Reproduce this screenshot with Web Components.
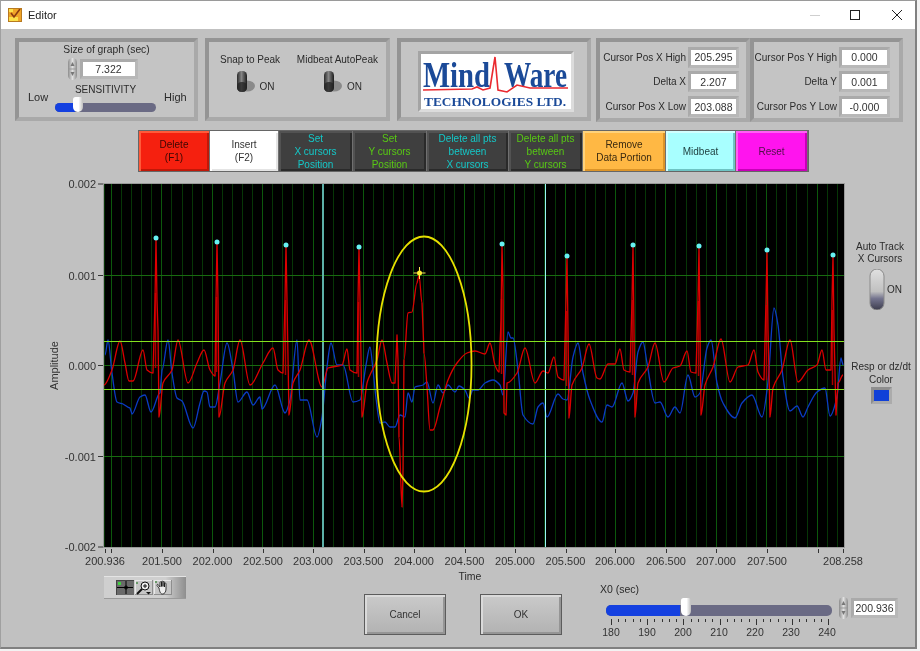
<!DOCTYPE html>
<html>
<head>
<meta charset="utf-8">
<title>Editor</title>
<style>
  html, body { margin: 0; height: 100%; background: #f2f2f2; overflow: hidden; }
  body { font: 10px "Liberation Sans", Arial, sans-serif; color: #2b2b2b; }
</style>
</head>
<body>
<editor-window>
  <top-bar></top-bar>
  <button-bar></button-bar>
  <graph-row></graph-row>
  <bottom-row></bottom-row>
</editor-window>

<script>
class editorWindow extends HTMLElement {
    constructor() {
        super();
        this.attachShadow({ mode: "open" });
    }
    connectedCallback() {
        this.shadowRoot.innerHTML = `
        <style>
            :host {
                display: block;
                width: 917px;
                height: 649px;
                box-sizing: border-box;
                border-top: 1px solid #9a9a9a;
                border-left: 1px solid #a0a0a0;
                border-right: 2px solid #808080;
                border-bottom: 2px solid #808080;
                background: #c1c1c1;
                filter: blur(.3px);
            }
            .title {
                display: flex;
                align-items: center;
                height: 28px;
                background: #fff;
                padding-left: 7px;
                font-size: 11px;
                color: #222;
            }
            .title svg.app { margin-right: 6px; }
            .title span { flex: 1; }
            .controls { display: flex; align-items: center; padding-right: 13px; }
            .controls svg { display: block; }
            .controls svg + svg { margin-left: 30px; }
        </style>
        <div class="title">
            <svg class="app" width="14" height="14" viewBox="0 0 14 14">
                <rect width="14" height="14" fill="#f0a428"/>
                <rect x="1" y="9" width="9" height="4" fill="#fbe04a"/>
                <rect x="1" y="1" width="4" height="3" fill="#fbe04a"/>
                <path d="M3 5l3 4 6-8" fill="none" stroke="#8a3a10" stroke-width="1.600"/>
                <rect x=".5" y=".5" width="13" height="13" fill="none" stroke="#b87a20"/>
            </svg>
            <span>Editor</span>
            <div class="controls">
                <svg width="10" height="10" viewBox="0 0 10 10"><path d="M0 5.500H10" stroke="#cfcfcf"/></svg>
                <svg width="10" height="10" viewBox="0 0 10 10"><rect x=".5" y=".5" width="9" height="9" fill="none" stroke="#222"/></svg>
                <svg style="margin-left:32px" width="10" height="10" viewBox="0 0 10 10"><path d="M0 0L10 10M10 0L0 10" stroke="#222"/></svg>
            </div>
        </div>
        <slot></slot>
        `;
    }
}

class lvPanel extends HTMLElement {
    constructor() {
        super();
        this.attachShadow({ mode: "open" });
    }
    connectedCallback() {
        this.shadowRoot.innerHTML = `
        <style>
            :host {
                display: block;
                box-sizing: border-box;
                height: 83px;
                border: 4px solid;
                border-color: #949494 #a9a9a9 #a9a9a9 #949494;
                background: #c4c4c4;
            }
        </style>
        <slot></slot>
        `;
    }
}

class lvNumeric extends HTMLElement {
    constructor() {
        super();
        this.attachShadow({ mode: "open" });
    }
    connectedCallback() {
        const spin = this.hasAttribute("spin") ? `
            <svg class="spin" width="11" height="22" viewBox="0 0 11 22">
                <defs><linearGradient id="s" x1="0" x2="1" y1="0" y2="0">
                    <stop offset="0" stop-color="#8c8c8c"/><stop offset=".5" stop-color="#e0e0e0"/><stop offset="1" stop-color="#8c8c8c"/>
                </linearGradient></defs>
                <rect x="1" y="0" width="9" height="22" rx="4.500" fill="url(#s)"/>
                <path d="M5.500 4L3.500 8H7.500Z M5.500 18L3.500 14H7.500Z" fill="#777"/>
                <path d="M2 11H9" stroke="#999"/>
            </svg>` : "";
        this.shadowRoot.innerHTML = `
        <style>
            :host { display: inline-flex; align-items: center; }
            .spin { margin-right: 2px; }
            .box {
                box-sizing: border-box;
                width: var(--w, 51px);
                height: var(--h, 21px);
                border: 3px solid;
                border-color: #aaaaaa #b8b8b8 #b8b8b8 #aaaaaa;
                background: #fff;
                display: flex;
                align-items: center;
                justify-content: center;
                font-size: 10.500px;
                color: #333;
            }
        </style>
        ${spin}
        <div class="box">${this.getAttribute("value")}</div>
        `;
    }
}

class lvToggle extends HTMLElement {
    constructor() {
        super();
        this.attachShadow({ mode: "open" });
    }
    connectedCallback() {
        this.shadowRoot.innerHTML = `
        <style>
            :host {
                display: flex;
                flex-direction: column;
                align-items: center;
                font-size: 10px;
            }
            .row { display: flex; align-items: flex-end; margin-top: 5px; margin-left: 10px; }
            .on { margin-left: 5px; margin-bottom: 1px; }
        </style>
        <div>${this.getAttribute("label")}</div>
        <div class="row">
            <svg width="19" height="23" viewBox="0 0 19 23">
                <defs><linearGradient id="k" x1="0" x2="1" y1="0" y2="0">
                    <stop offset="0" stop-color="#2a2a2a"/><stop offset=".45" stop-color="#858585"/><stop offset="1" stop-color="#1c1c1c"/>
                </linearGradient></defs>
                <ellipse cx="11" cy="16" rx="8" ry="5.500" fill="#8a8a8a"/>
                <rect x="1" y="1" width="10" height="21" rx="4.500" fill="url(#k)"/>
                <rect x="1" y="12" width="10" height="10" rx="4.500" fill="#222" opacity=".75"/>
            </svg>
            <span class="on">ON</span>
        </div>
        `;
    }
}

class lvSlider extends HTMLElement {
    constructor() {
        super();
        this.attachShadow({ mode: "open" });
    }
    connectedCallback() {
        this.shadowRoot.innerHTML = `
        <style>
            :host {
                display: block;
                position: relative;
                height: var(--track, 9px);
                border-radius: 5px;
                background: #6a6a84;
            }
            .fill {
                height: 100%;
                width: ${this.getAttribute("fill")}px;
                border-radius: 5px 0 0 5px;
                background: #1440e0;
            }
            .thumb {
                position: absolute;
                left: ${this.getAttribute("thumb")}px;
                bottom: 0;
                width: 10px;
                height: var(--thumb, 15px);
                border-radius: 3px 3px 6px 6px;
                background: linear-gradient(90deg, #fff 55%, #bdbdbd);
            }
        </style>
        <div class="fill"></div>
        <div class="thumb"></div>
        `;
    }
}

class mindwareLogo extends HTMLElement {
    constructor() {
        super();
        this.attachShadow({ mode: "open" });
    }
    connectedCallback() {
        this.shadowRoot.innerHTML = `
        <style>
            :host {
                display: block;
                box-sizing: border-box;
                width: 156px;
                height: 61px;
                border: 3px solid;
                border-color: #a4a4a4 #dcdcdc #dcdcdc #a4a4a4;
            }
            svg { display: block; background: #fff; }
            text { font-family: "Liberation Serif", "Times New Roman", serif; font-weight: bold; fill: #1b4a98; }
        </style>
        <svg width="150" height="55" viewBox="0 0 150 55">
            <text transform="translate(2 33) scale(1 1.250)" font-size="28" textLength="67" lengthAdjust="spacingAndGlyphs">Mind</text>
            <text transform="translate(83 33) scale(1 1.250)" font-size="28" textLength="63" lengthAdjust="spacingAndGlyphs">Ware</text>
            <polyline points="2,36 51,35 56,33 62,36 69,34 74,3 77,36 86,38 96,31 109,34 147,34" fill="none" stroke="#ea2a30" stroke-width="1.600"/>
            <text x="3" y="52" font-size="11.500" textLength="142" lengthAdjust="spacingAndGlyphs">TECHNOLOGIES LTD.</text>
        </svg>
        `;
    }
}

class topBar extends HTMLElement {
    constructor() {
        super();
        this.attachShadow({ mode: "open" });
    }
    connectedCallback() {
        const row = (label, value) => `<span class="l">${label}</span><lv-numeric value="${value}"></lv-numeric>`;
        this.shadowRoot.innerHTML = `
        <style>
            :host {
                display: flex;
                padding: 9px 0 0 14px;
            }
            .size { width: 183px; }
            .size .head { text-align: center; padding-top: 2px; line-height: 12px; font-size: 10.300px; }
            .size .num { display: flex; justify-content: center; margin-top: 2px; --w: 58px; --h: 20px; padding-right: 9px; }
            .sens { display: grid; grid-template-columns: 27px 101px 1fr; padding-left: 9px; margin-top: 4px; }
            .sens .c { text-align: center; }
            .sens .c div { line-height: 11px; margin-bottom: 8px; }
            .big { font-size: 11px; margin-top: 7px; line-height: 13px; }
            .snap { width: 185px; margin-left: 7px; display: flex; justify-content: space-between; padding: 12px 8px 0 11px; box-sizing: border-box; }
            .logo { width: 194px; margin-left: 7px; padding: 9px 0 0 17px; box-sizing: border-box; }
            .cur {
                width: 154px;
                margin-left: 5px;
                box-sizing: border-box;
                display: grid;
                grid-template-columns: 1fr 51px;
                column-gap: 2px;
                row-gap: 2.500px;
                padding: 4px 7px 0 0;
                align-items: center;
                text-align: right;
                height: 84px;
            }
            .cur.y { margin-left: 0; width: 153px; padding-right: 9px; }
            .l { white-space: nowrap; }
        </style>
        <lv-panel class="size">
            <div class="head">Size of graph (sec)</div>
            <div class="num"><lv-numeric spin value="7.322"></lv-numeric></div>
            <div class="sens">
                <span class="big">Low</span>
                <div class="c"><div>SENSITIVITY</div><lv-slider fill="20" thumb="18"></lv-slider></div>
                <span class="big" style="padding-left:8px">High</span>
            </div>
        </lv-panel>
        <lv-panel class="snap">
            <lv-toggle label="Snap to Peak"></lv-toggle>
            <lv-toggle label="Midbeat AutoPeak"></lv-toggle>
        </lv-panel>
        <lv-panel class="logo"><mindware-logo></mindware-logo></lv-panel>
        <lv-panel class="cur">
            ${row("Cursor Pos X High", "205.295")}
            ${row("Delta X", "2.207")}
            ${row("Cursor Pos X Low", "203.088")}
        </lv-panel>
        <lv-panel class="cur y">
            ${row("Cursor Pos Y High", "0.000")}
            ${row("Delta Y", "0.001")}
            ${row("Cursor Pos Y Low", "-0.000")}
        </lv-panel>
        `;
    }
}

class lvButton extends HTMLElement {
    constructor() {
        super();
        this.attachShadow({ mode: "open" });
    }
    connectedCallback() {
        this.shadowRoot.innerHTML = `
        <style>
            :host {
                display: flex;
                align-items: center;
                justify-content: center;
                box-sizing: border-box;
                text-align: center;
                line-height: 13px;
                height: 100%;
                background: var(--bg);
                color: var(--fg);
                box-shadow: inset 2px 2px 0 var(--hi), inset -2px -2px 0 var(--lo);
            }
        </style>
        <div><slot></slot></div>
        `;
    }
}

class buttonBar extends HTMLElement {
    constructor() {
        super();
        this.attachShadow({ mode: "open" });
    }
    connectedCallback() {
        const dark = "--bg:#3f3f3f;--hi:#525252;--lo:#2a2a2a;";
        this.shadowRoot.innerHTML = `
        <style>
            :host {
                display: flex;
                width: 671px;
                height: 42px;
                box-sizing: border-box;
                margin: 8px 0 0 137px;
                border: 1px solid #666;
                gap: 1px;
                background: #707070;
            }
            .cy { --fg: #14c8c8; }
            .gr { --fg: #58c814; }
        </style>
        <lv-button style="width:70px;--bg:#f5200f;--fg:#3a0804;--hi:#ff5a3a;--lo:#c01808">Delete<br>(F1)</lv-button>
        <lv-button style="width:68px;--bg:#fff;--fg:#333;--hi:#fff;--lo:#e4e4e4">Insert<br>(F2)</lv-button>
        <lv-button class="cy" style="width:73px;${dark}">Set<br>X cursors<br>Position</lv-button>
        <lv-button class="gr" style="width:73px;${dark}">Set<br>Y cursors<br>Position</lv-button>
        <lv-button class="cy" style="width:81px;${dark}">Delete all pts<br>between<br>X cursors</lv-button>
        <lv-button class="gr" style="width:73px;${dark}">Delete all pts<br>between<br>Y cursors</lv-button>
        <lv-button style="width:82px;--bg:#ffb844;--fg:#3a2a10;--hi:#ffd27a;--lo:#dc9428">Remove<br>Data Portion</lv-button>
        <lv-button style="width:69px;--bg:#a8ffff;--fg:#244;--hi:#d0ffff;--lo:#6ec4c4">Midbeat</lv-button>
        <lv-button style="width:71px;--bg:#ff14ee;--fg:#501048;--hi:#ff60f4;--lo:#c800b8">Reset</lv-button>
        `;
    }
}

class ecgGraph extends HTMLElement {
    constructor() {
        super();
        this.attachShadow({ mode: "open" });
    }
    getRed() {
        return "104,385 112,370 120,341 125,363 129,381 133,381 143,350 147,370 153,373 155,300 156,238 157,300 158,330 159,417 163,383 172,370 178,340 188,383 197,363 204,350 210,370 215,376 216,300 217,242 218,300 219,417 225,383 233,370 240,340 250,385 263,363 273,348 278,370 283,373 285,300 286,245 287,300 289,415 293,383 300,370 309,340 322,387 328,368 342,365 347,349 350,370 357,373 358,300 359,247 360,300 362,417 367,383 370,375 377,360 382,340 387,363 392,383 395,383 397,335 398,360 399,437 402,507 403,470 404,360 408,313 412,312 417,283 419,275 422,303 424,353 427,387 430,430 433,430 440,407 448,380 457,363 467,353 475,351 485,354 490,343 495,365 499,372 501,320 502,245 503,287 504,413 506,415 507,383 517,373 525,348 535,383 543,371 548,373 554,357 558,377 564,380 566,300 567,257 568,330 569,418 572,385 582,368 589,344 597,378 600,379 608,364 615,364 620,349 624,370 630,372 632,300 633,245 634,330 635,417 638,383 648,367 655,343 664,382 673,368 680,366 687,351 691,372 696,373 698,300 699,246 700,330 701,415 705,385 713,367 721,339 730,382 738,367 748,365 754,350 758,372 764,380 766,300 767,251 768,330 770,417 773,388 782,370 790,340 798,382 808,370 817,365 822,350 826,370 831,370 832,300 833,255 834,330 836,415 838,383 843,375";
    }
    getBlue() {
        return "105,355 108,340 112,373 117,402 123,404 130,408 132,414 140,397 145,395 151,412 160,393 162,370 168,340 172,373 177,398 182,401 193,428 200,403 204,391 207,392 210,407 215,407 220,383 227,343 233,370 238,402 247,392 253,405 260,397 262,409 275,385 285,413 290,400 297,340 300,400 307,400 317,437 322,417 327,367 331,343 337,365 343,365 353,402 360,400 366,365 370,347 373,370 376,398 380,423 385,422 390,427 395,427 400,415 405,417 408,393 412,402 415,387 423,385 427,382 433,403 438,385 443,393 448,385 455,392 459,386 465,390 469,398 473,390 478,390 485,383 493,380 500,385 503,395 508,332 511,338 513,338 518,370 523,415 533,424 538,407 543,403 547,417 558,394 563,399 567,400 573,357 578,343 583,373 590,400 602,422 607,405 612,407 622,383 628,401 633,393 638,352 643,342 647,363 655,403 660,402 668,417 675,407 680,413 688,375 695,397 700,393 707,348 711,340 717,383 723,403 735,418 742,403 752,395 762,417 768,382 774,308 778,325 783,377 790,411 797,406 803,417 808,407 817,392 825,388 830,416 837,397 841,358 843,365";
    }
    // points to a path: short steep segments stay straight, the rest get rounded
    smooth(str) {
        const p = str.split(" ").map(s => s.split(",").map(Number));
        const steep = i => p[i + 1][0] - p[i][0] <= 2;
        const sec = i => (p[i + 1][1] - p[i][1]) / (p[i + 1][0] - p[i][0]);
        const slope = i => {
            if (i === 0 || i === p.length - 1) return 0;
            if (steep(i - 1) || steep(i)) return 0;
            const a = sec(i - 1), b = sec(i);
            return a * b <= 0 ? 0 : 2 * a * b / (a + b);
        };
        let d = `M${p[0][0]} ${p[0][1]}`;
        for (let i = 0; i < p.length - 1; i++) {
            const [x0, y0] = p[i], [x1, y1] = p[i + 1];
            if (steep(i)) { d += `L${x1} ${y1}`; continue; }
            const h = (x1 - x0) / 3;
            d += `C${x0 + h} ${(y0 + slope(i) * h).toFixed(1)} ${x1 - h} ${(y1 - slope(i + 1) * h).toFixed(1)} ${x1} ${y1}`;
        }
        return d;
    }
    getGrid() {
        let s = "";
        for (let i = 0; 111 + i * 10.08 < 844; i++) {
            const x = Math.round(111 + i * 10.08) + 0.5;
            s += `<path d="M${x} 184V547" stroke="${i % 5 === 0 ? "#0c580c" : "#073607"}"/>`;
        }
        s += `<path d="M104.500 184V547" stroke="#073607"/>`;
        [275.5, 365.5, 456.5].forEach(y => {
            s += `<path d="M104 ${y}H844" stroke="#186a10"/>`;
        });
        return s;
    }
    getAxes() {
        let s = "";
        [["0.002", 184], ["0.001", 275.5], ["0.000", 365.5], ["-0.001", 456.5], ["-0.002", 547]].forEach(([t, y]) => {
            s += `<text x="96" y="${y + 4}" text-anchor="end">${t}</text><path d="M98 ${y}H103" stroke="#333"/>`;
        });
        [["200.936", 105], ["", 111], ["201.500", 162], ["202.000", 212.5], ["202.500", 263], ["203.000", 313], ["203.500", 363.5], ["204.000", 414], ["204.500", 464.5], ["205.000", 515], ["205.500", 565.5], ["206.000", 615], ["206.500", 666], ["207.000", 716], ["207.500", 767], ["", 818], ["208.258", 843]].forEach(([t, x]) => {
            const px = Math.round(x) + 0.5;
            s += `<path d="M${px} 549V553" stroke="#333"/>`;
            if (t) s += `<text x="${x}" y="565" text-anchor="middle">${t}</text>`;
        });
        return s;
    }
    getPeaks() {
        const peaks = [[156, 238], [217, 242], [286, 245], [359, 247], [502, 244], [567, 256], [633, 245], [699, 246], [767, 250], [833, 255]];
        let dark = "";
        let dots = "";
        peaks.forEach(([x, y]) => {
            dark += `<path d="M${x - 0.5} ${y + 55}V${y + 130}" stroke="#a80000" stroke-width="1.500"/>`;
            dots += `<circle cx="${x}" cy="${y}" r="2.500" fill="#66f2f2"/>`;
        });
        return { dark, dots };
    }
    connectedCallback() {
        const peaks = this.getPeaks();
        this.shadowRoot.innerHTML = `
        <style>
            :host { display: block; width: 812px; height: 390px; }
            svg { display: block; overflow: visible; }
            text { font: 11px "Liberation Sans", Arial, sans-serif; fill: #333; }
            .crisp path { shape-rendering: crispEdges; }
        </style>
        <svg width="812" height="390" viewBox="40 178 812 390">
            <text transform="translate(58 365.500) rotate(-90)" text-anchor="middle">Amplitude</text>
            ${this.getAxes()}
            <rect x="103" y="183" width="742" height="365" fill="#9a9a9a"/>
            <rect x="104" y="184" width="740" height="363" fill="#000"/>
            <g class="crisp">${this.getGrid()}</g>
            <path d="${this.smooth(this.getBlue())}" fill="none" stroke="#0a3cc4" stroke-width="1.300" stroke-linejoin="round"/>
            ${peaks.dark}
            <path d="${this.smooth(this.getRed())}" fill="none" stroke="#dc0000" stroke-width="1.300" stroke-linejoin="round"/>
            <g class="crisp">
                <path d="M322.500 184V547" stroke="#5cb0a8" stroke-width="2"/>
                <path d="M545.500 184V547" stroke="#96f4f4"/>
                <path d="M104 341.500H844M104 389.500H844" stroke="#86e01e"/>
            </g>
            <ellipse cx="424" cy="364" rx="47.500" ry="127.500" fill="none" stroke="#e6e000" stroke-width="1.800"/>
            ${peaks.dots}
            <path d="M419.500 267V279M413.500 273H425.500" stroke="#ffe95a"/>
            <circle cx="419.500" cy="273" r="2.500" fill="#ffee30"/>
        </svg>
        `;
    }
}

class sidePanel extends HTMLElement {
    constructor() {
        super();
        this.attachShadow({ mode: "open" });
    }
    connectedCallback() {
        this.shadowRoot.innerHTML = `
        <style>
            :host {
                display: flex;
                flex-direction: column;
                align-items: center;
                width: 58px;
                padding-top: 63px;
                text-align: center;
                line-height: 12px;
                font-size: 10px;
                white-space: nowrap;
            }
            .track { margin-left: -2px; }
            .tog { display: flex; align-items: center; margin: 4px 0 0 9px; }
            .tog svg { display: block; }
            .tog span { margin-left: 2px; }
            .resp { margin-top: 50px; line-height: 13px; }
            .swatch {
                box-sizing: border-box;
                width: 21px;
                height: 17px;
                margin-top: 1px;
                border: 3px solid;
                border-color: #8e8e8e #ababab #ababab #8e8e8e;
                background: #1040d8;
            }
        </style>
        <div class="track">Auto Track<br>X Cursors</div>
        <div class="tog">
            <svg width="16" height="41" viewBox="0 0 16 41">
                <defs><linearGradient id="b" x1="0" x2="0" y1="0" y2="1">
                    <stop offset="0" stop-color="#e0e0e0"/><stop offset=".55" stop-color="#c0c0c0"/><stop offset=".72" stop-color="#74748e"/><stop offset="1" stop-color="#3c3c4c"/>
                </linearGradient></defs>
                <rect x="1" y="0" width="14" height="41" rx="7" fill="url(#b)" stroke="#8a8a8a"/>
            </svg>
            <span>ON</span>
        </div>
        <div class="resp">Resp or dz/dt<br>Color</div>
        <div class="swatch"></div>
        `;
    }
}

class graphRow extends HTMLElement {
    constructor() {
        super();
        this.attachShadow({ mode: "open" });
    }
    connectedCallback() {
        this.shadowRoot.innerHTML = `
        <style>
            :host { display: flex; margin: 6px 0 0 39px; }
        </style>
        <ecg-graph></ecg-graph>
        <side-panel></side-panel>
        `;
    }
}

class graphPalette extends HTMLElement {
    constructor() {
        super();
        this.attachShadow({ mode: "open" });
    }
    connectedCallback() {
        this.shadowRoot.innerHTML = `
        <style>
            :host {
                display: flex;
                align-items: center;
                box-sizing: border-box;
                width: 82px;
                height: 23px;
                padding-left: 12px;
                gap: 1px;
                background: linear-gradient(90deg, #cfcfcf, #cfcfcf 75%, #8e8e8e);
                box-shadow: inset 0 -1px 0 #9a9a9a, inset 0 1px 0 #e4e4e4;
            }
            .b { width: 18px; height: 15px; background: #c6c6c6; box-shadow: inset -1px -1px 0 #8e8e8e, inset 1px 1px 0 #e8e8e8; }
            .b.on { background: #6a6a6a; box-shadow: inset 1px 1px 0 #444; }
            svg { display: block; }
        </style>
        <div class="b on"><svg width="18" height="15" viewBox="0 0 18 15">
            <path d="M1 7.500H17M10 1V14" stroke="#000"/><circle cx="10" cy="7.500" r="1.500" fill="none" stroke="#000"/>
            <rect x="2" y="2" width="3" height="3" fill="#40d040"/>
        </svg></div>
        <div class="b"><svg width="18" height="15" viewBox="0 0 18 15">
            <circle cx="10" cy="6" r="4" fill="#eee" stroke="#111"/><path d="M7 9L2 14" stroke="#111" stroke-width="2"/>
            <path d="M8 6H12M10 4V8" stroke="#111"/><path d="M11 12H16L13.500 14.500Z" fill="#111"/>
            <rect x="1" y="2" width="2" height="2" fill="#6a9a6a"/>
        </svg></div>
        <div class="b"><svg width="18" height="15" viewBox="0 0 18 15">
            <path d="M5 8L3 5.500C2.500 4.500 4 4 4.500 5L6 7V2.500C6 1.500 7.500 1.500 7.500 2.500V6.500V1.800C7.500 .8 9 .8 9 1.800V6.500V2.300C9 1.300 10.500 1.300 10.500 2.300V7V3.800C10.500 2.800 12 2.800 12 3.800V9C12 12 10.500 14 8.500 14C6.500 14 5.800 12 5 8Z" fill="#eee" stroke="#111" stroke-width=".8"/>
            <rect x="1" y="1" width="2" height="2" fill="#6a9a6a"/>
        </svg></div>
        `;
    }
}

class plainButton extends HTMLElement {
    constructor() {
        super();
        this.attachShadow({ mode: "open" });
    }
    connectedCallback() {
        this.shadowRoot.innerHTML = `
        <style>
            :host {
                display: flex;
                align-items: center;
                justify-content: center;
                box-sizing: border-box;
                width: 82px;
                height: 41px;
                border: 1px solid #5c5c5c;
                background: linear-gradient(#cacaca, #b2b2b2);
                box-shadow: inset 2px 2px 0 #dadada, inset -2px -2px 0 #959595;
                color: #333;
            }
        </style>
        <slot></slot>
        `;
    }
}

class sliderScale extends HTMLElement {
    constructor() {
        super();
        this.attachShadow({ mode: "open" });
    }
    connectedCallback() {
        let ticks = "";
        for (let i = 0; i <= 30; i++) {
            const x = Math.round(5 + i * 7.24) + 0.5;
            ticks += `<path d="M${x} 0V${i % 5 === 0 ? 6 : 3}" stroke="#333"/>`;
        }
        let labels = "";
        [180, 190, 200, 210, 220, 230, 240].forEach((v, i) => {
            labels += `<text x="${5 + i * 36}" y="17" text-anchor="middle">${v}</text>`;
        });
        this.shadowRoot.innerHTML = `
        <style>
            :host { display: block; margin-top: 3px; }
            svg { display: block; overflow: visible; }
            text { font: 10.500px "Liberation Sans", Arial, sans-serif; fill: #333; }
        </style>
        <svg width="226" height="20" viewBox="0 0 226 20">${ticks}${labels}</svg>
        `;
    }
}

class bottomRow extends HTMLElement {
    constructor() {
        super();
        this.attachShadow({ mode: "open" });
    }
    connectedCallback() {
        this.shadowRoot.innerHTML = `
        <style>
            :host { display: flex; }
            graph-palette { margin: 8px 0 0 103px; }
            .mid { width: 198px; margin-left: 178px; }
            .time { font-size: 10.500px; text-align: center; padding: 1px 0 0 14px; line-height: 14px; }
            .btns { display: flex; gap: 34px; margin-top: 11px; }
            .x0 { margin-left: 44px; padding-top: 15px; }
            .x0 .lab { line-height: 12px; margin-left: -6px; font-size: 10.500px; }
            .x0 .line { display: flex; align-items: flex-start; }
            .x0 .col { width: 226px; padding-top: 10px; }
            lv-slider { --track: 11px; --thumb: 18px; }
            lv-numeric { --w: 47px; --h: 20px; margin: 2px 0 0 6px; }
        </style>
        <graph-palette></graph-palette>
        <div class="mid">
            <div class="time">Time</div>
            <div class="btns"><plain-button>Cancel</plain-button><plain-button>OK</plain-button></div>
        </div>
        <div class="x0">
            <div class="lab">X0 (sec)</div>
            <div class="line">
                <div class="col"><lv-slider fill="74" thumb="75"></lv-slider><slider-scale></slider-scale></div>
                <lv-numeric spin value="200.936"></lv-numeric>
            </div>
        </div>
        `;
    }
}

customElements.define("editor-window", editorWindow);
customElements.define("lv-panel", lvPanel);
customElements.define("lv-numeric", lvNumeric);
customElements.define("lv-toggle", lvToggle);
customElements.define("lv-slider", lvSlider);
customElements.define("mindware-logo", mindwareLogo);
customElements.define("top-bar", topBar);
customElements.define("lv-button", lvButton);
customElements.define("button-bar", buttonBar);
customElements.define("ecg-graph", ecgGraph);
customElements.define("side-panel", sidePanel);
customElements.define("graph-row", graphRow);
customElements.define("graph-palette", graphPalette);
customElements.define("plain-button", plainButton);
customElements.define("slider-scale", sliderScale);
customElements.define("bottom-row", bottomRow);
</script>
</body>
</html>
